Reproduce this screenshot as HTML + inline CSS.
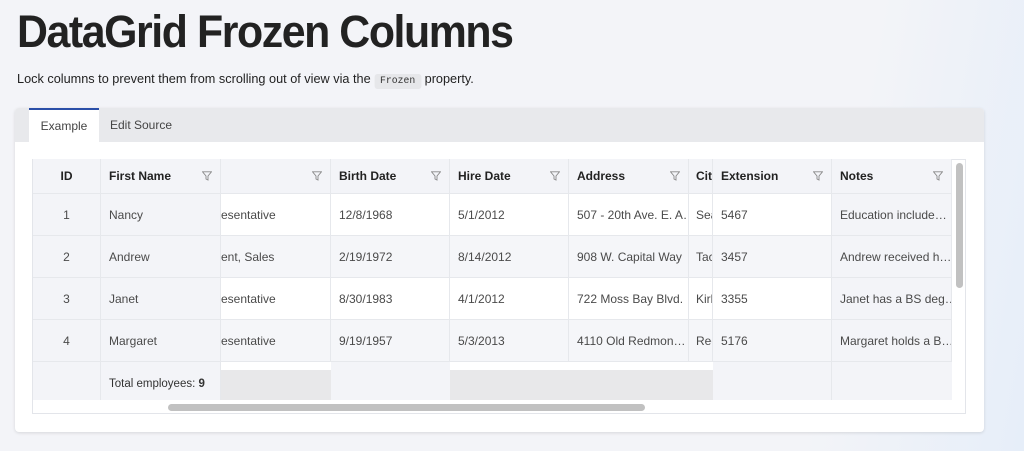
<!DOCTYPE html>
<html><head><meta charset="utf-8"><style>
*{box-sizing:border-box;margin:0;padding:0}
body{width:1024px;height:451px;overflow:hidden;background:linear-gradient(100deg,#f3f4f8 0%,#f3f4f8 80%,#e6eef9 100%);font-family:"Liberation Sans",sans-serif;position:relative}
.a{position:absolute}
h1{position:absolute;left:17px;top:6px;font-size:45px;font-weight:bold;color:#222;letter-spacing:-1.5px;transform-origin:left top;transform:scaleX(0.952);white-space:nowrap}
h1 span{font-weight:600}
.sub{left:17px;top:71px;font-size:13px;color:#222;white-space:nowrap;transform-origin:left top;transform:scaleX(0.977)}
code{font-family:"Liberation Mono",monospace;font-size:10px;background:#e6e7ea;border-radius:3px;padding:2px 6px;color:#333}
.card{left:15px;top:108px;width:969px;height:324px;background:#fff;border-radius:4px;box-shadow:0 1px 3px rgba(0,0,0,.12)}
.tabs{left:15px;top:108px;width:969px;height:34px;background:#e8e9ec;border-radius:4px 4px 0 0}
.tab{top:108px;height:34px;font-size:12px;line-height:34px;color:#444;text-align:center}
.grid{left:32px;top:159px;width:934px;height:255px;border:1px solid #e3e5ea;background:#fff}
.c{position:absolute;font-size:12px;color:#4a4a4a;padding-left:8px;white-space:nowrap;overflow:hidden;border-right:1px solid #e6e8ec;border-bottom:1px solid #e6e8ec;display:flex;align-items:center}
.h{color:#222;font-weight:bold;background:#f3f4f8}
.f{background:#f3f4f8}
.w{background:#fff}
.g{background:#f5f6f9}
.fi{position:absolute;width:10px;height:10px}
</style></head><body>
<h1><span>DataGrid</span> Frozen Columns</h1>
<div class="a sub">Lock columns to prevent them from scrolling out of view via the <code>Frozen</code> property.</div>
<div class="a card"></div>
<div class="a tabs"></div>
<div class="a tab" style="left:29px;width:70px;background:#fff;border-top:2px solid #2a4fa8;line-height:32px">Example</div>
<div class="a tab" style="left:101px;width:80px">Edit Source</div>
<div class="a grid"></div>
<div id="g"></div>
<div class="a" style="left:221px;top:370px;width:110px;height:30px;background:#e8e8ea"></div>
<div class="a" style="left:450px;top:370px;width:263px;height:30px;background:#e8e8ea"></div>
<div class="a" style="left:331px;top:362px;width:119px;height:38px;background:#f3f4f8"></div>
<div class="a" style="left:33px;top:362px;width:188px;height:38px;background:#f3f4f8;border-right:1px solid #e6e8ec"></div>
<div class="a" style="left:33px;top:362px;width:68px;height:38px;border-right:1px solid #e6e8ec"></div>
<div class="a" style="left:109px;top:362px;height:44px;line-height:44px;font-size:11.5px;color:#333">Total employees: <b>9</b></div>
<div class="a" style="left:713px;top:362px;width:119px;height:38px;background:#f3f4f8;border-right:1px solid #e6e8ec"></div>
<div class="a" style="left:832px;top:362px;width:120px;height:38px;background:#f3f4f8"></div>
<div class="a" style="left:168px;top:404px;width:477px;height:7px;background:#c1c1c1;border-radius:4px"></div>
<div class="a" style="left:956px;top:163px;width:7px;height:125px;background:#c1c1c1;border-radius:4px"></div>
<script>
var cols=[[33,68,'ID',1,0],[101,120,'First Name',1,1],[221,110,'',0,1],[331,119,'Birth Date',0,1],[450,119,'Hire Date',0,1],[569,120,'Address',0,1],[689,24,'City',0,0],[713,119,'Extension',2,1],[832,120,'Notes',1,1]];
var data=[['1','Nancy','esentative','12/8/1968','5/1/2012','507 - 20th Ave. E. A…','Sea','5467','Education include…'],
['2','Andrew','ent, Sales','2/19/1972','8/14/2012','908 W. Capital Way','Tac','3457','Andrew received h…'],
['3','Janet','esentative','8/30/1983','4/1/2012','722 Moss Bay Blvd.','Kirl','3355','Janet has a BS deg…'],
['4','Margaret','esentative','9/19/1957','5/3/2013','4110 Old Redmon…','Rec','5176','Margaret holds a B…']];
var s='';
var fil='<svg class="fi" viewBox="0 0 10 10" style="right:8px;top:12px"><path d="M0.5 0.8h9L6 5v4L4 8V5z" fill="none" stroke="#888" stroke-width="0.9"/></svg>';
cols.forEach(function(c,i){
 var st='left:'+c[0]+'px;top:159px;width:'+c[1]+'px;height:35px;'+(i==0?'justify-content:center;padding:0':'')+(i==6?'padding-left:7px;':'');
 s+='<div class="c h" style="'+st+'">'+c[2]+(c[4]?fil:'')+'</div>';
});
data.forEach(function(r,ri){
 var y=194+ri*42;
 cols.forEach(function(c,i){
  var cls=c[3]==1?'f':(ri%2?'g':'w');
  var st='left:'+c[0]+'px;top:'+y+'px;width:'+c[1]+'px;height:42px;'+(i==0?'justify-content:center;padding:0;':'')+(i==2?'padding-left:0;':'')+(i==6?'padding-left:7px;':'');
  s+='<div class="c '+cls+'" style="'+st+'">'+r[i]+'</div>';
 });
});
document.getElementById('g').innerHTML=s;
</script>
</body></html>
